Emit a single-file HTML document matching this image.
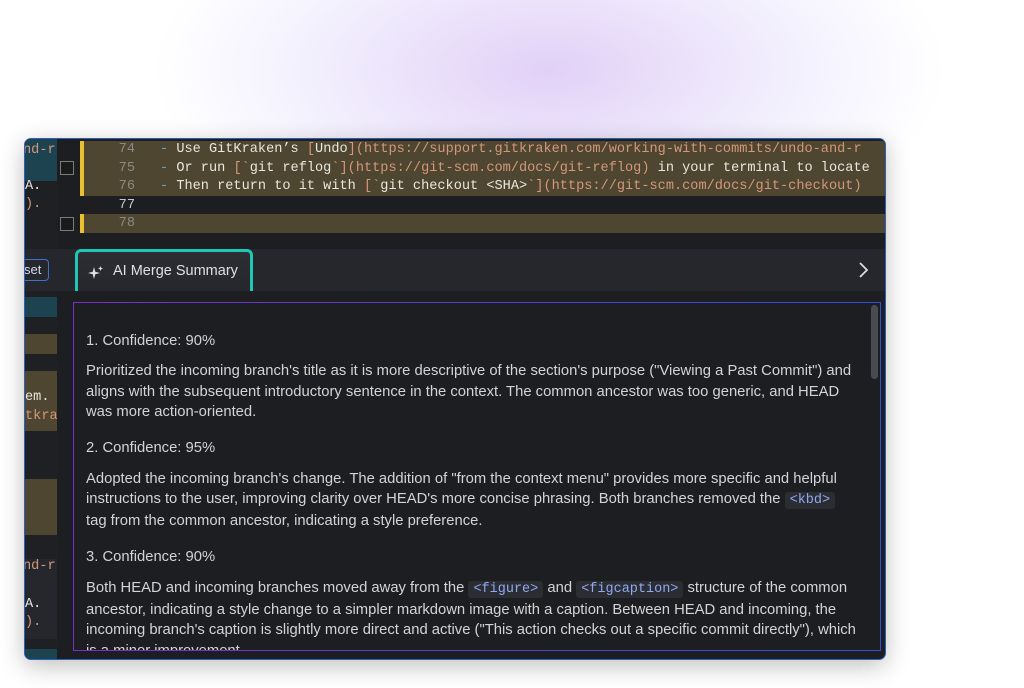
<!DOCTYPE html>
<html><head><meta charset="utf-8"><style>
*{margin:0;padding:0;box-sizing:border-box}
body{width:1024px;height:688px;background:#fff;position:relative;overflow:hidden;font-family:"Liberation Sans",sans-serif}
.glow{position:absolute;left:150px;top:-120px;width:800px;height:380px;border-radius:50%;background:radial-gradient(ellipse at center,rgba(200,170,240,.55),rgba(210,200,250,.25) 45%,rgba(255,255,255,0) 70%)}
.win{position:absolute;left:24px;top:138px;width:862px;height:522px;border-radius:7px;background:#1d1e22;overflow:hidden;border:1.5px solid #2d5fb5;box-shadow:0 6px 24px rgba(0,0,0,.25)}
.mono{font-family:"Liberation Mono",monospace;font-size:13.6px}
.code{position:absolute;left:0;top:0;width:862px;height:110px;background:#1d1e22}
.ln{position:absolute;left:80px;width:30px;text-align:right;color:#8a8a80;line-height:18.5px}
.tx{position:absolute;left:135px;color:#e8e6de;line-height:18.5px;white-space:nowrap}
.d{color:#5aa7d8}.o{color:#d4977a}
.cb{position:absolute;left:35px;width:14px;height:14px;border:1.5px solid #7a7a7a;background:#1a1a1a}
.yb{position:absolute;left:55px;width:4px;background:#e8c030}
.hl{position:absolute;left:59px;right:0;background:#4e4630}
.left{position:absolute;left:0;top:0;width:32px;height:522px;background:#1f2024;overflow:hidden;white-space:nowrap}
.hdr{position:absolute;left:0;top:110px;width:862px;height:42px;background:#25272d}
.tab{position:absolute;left:50px;top:0;width:178px;height:42px;border:3px solid #1fc7b5;border-bottom:none;border-radius:6px 6px 0 0;background:linear-gradient(#2c2e34,#25272d);color:#e0e0e0;font-size:14.5px;padding:11px 0 0 35px}
.box{position:absolute;left:48px;top:163px;width:808px;height:349px;border:1.5px solid;border-image:linear-gradient(90deg,#7a30c8,#3050d8) 1;background:#1d1e22;overflow:hidden}
.txt{position:absolute;left:12px;top:28px;color:#d4d4d4;font-size:14.8px;line-height:20.4px;white-space:nowrap}
.txt p{margin-bottom:15.5px}
.txt p.h{margin-bottom:10px}
code{font-family:"Liberation Mono",monospace;font-size:13.5px;background:#2b2d33;color:#8fa8f0;padding:1px 5px;border-radius:3px}
</style></head><body>
<div class="glow"></div>
<div class="win">
 <div class="code mono">
  <div class="hl" style="top:2px;height:55px"></div>
  <div class="hl" style="top:75px;height:18.5px"></div>
  <div class="yb" style="top:2px;height:55px"></div>
  <div class="yb" style="top:75px;height:18.5px"></div>
  <div class="cb" style="top:22px"></div>
  <div class="cb" style="top:78px"></div>
  <div class="ln" style="top:2px">74</div>
  <div class="ln" style="top:20.5px">75</div>
  <div class="ln" style="top:39px">76</div>
  <div class="ln" style="top:57.5px;color:#c8c8c8">77</div>
  <div class="ln" style="top:76px">78</div>
  <div class="tx" style="top:2px"><span class="d">-</span> Use GitKraken’s <span class="o">[</span>Undo<span class="o">](https://support.gitkraken.com/working-with-commits/undo-and-r</span></div>
  <div class="tx" style="top:20.5px"><span class="d">-</span> Or run <span class="o">[`</span>git reflog<span class="o">`](https://git-scm.com/docs/git-reflog)</span> in your terminal to locate</div>
  <div class="tx" style="top:39px"><span class="d">-</span> Then return to it with <span class="o">[`</span>git checkout &lt;SHA&gt;<span class="o">`](https://git-scm.com/docs/git-checkout)</span></div>
 </div>
 <div class="left mono">
  <div style="position:absolute;top:0;width:32px;height:42px;background:#1e4350"></div>
  <div style="position:absolute;top:4px;left:-2px;color:#d4977a">nd-r</div>
  <div style="position:absolute;top:40px;left:0;color:#e8e6de">A.</div>
  <div style="position:absolute;top:58px;left:0;color:#d4977a">).</div>
  <div style="position:absolute;top:158px;width:32px;height:20px;background:#1e4350"></div>
  <div style="position:absolute;top:195px;width:32px;height:20px;background:#4e4630"></div>
  <div style="position:absolute;top:232px;width:32px;height:60px;background:#4e4630"></div>
  <div style="position:absolute;top:251px;left:0;color:#e8e6de">em.</div>
  <div style="position:absolute;top:270px;left:0;color:#d4977a">tkra</div>
  <div style="position:absolute;top:340px;width:32px;height:56px;background:#4e4630"></div>
  <div style="position:absolute;top:420px;width:32px;height:80px;background:#25272c"></div>
  <div style="position:absolute;top:420px;left:-2px;color:#d4977a">nd-r</div>
  <div style="position:absolute;top:458px;left:0;color:#e8e6de">A.</div>
  <div style="position:absolute;top:476px;left:0;color:#d4977a">).</div>
  <div style="position:absolute;top:510px;width:32px;height:12px;background:#1e4350"></div>
 </div>
 <div class="hdr">
  <div style="position:absolute;left:-10px;top:10px;width:34px;height:22px;border:1.5px solid #3a72d0;border-radius:4px;color:#cfd8ea;font-size:13px;padding:2px 0 0 8px">set</div>
  <div class="tab"><svg style="position:absolute;left:10px;top:13px" width="16" height="16" viewBox="0 0 16 16" fill="#ddd"><path d="M6 2 L7.3 6.7 L12 8 L7.3 9.3 L6 14 L4.7 9.3 L0 8 L4.7 6.7Z"/><path d="M12.5 1 L13.2 2.8 L15 3.5 L13.2 4.2 L12.5 6 L11.8 4.2 L10 3.5 L11.8 2.8Z"/></svg>AI Merge Summary</div>
  <svg style="position:absolute;left:832px;top:12px" width="12" height="18" viewBox="0 0 12 18"><path d="M3 2 L10 9 L3 16" stroke="#ddd" stroke-width="1.8" fill="none"/></svg>
 </div>
 <div class="box">
  <div style="position:absolute;right:2px;top:2px;width:7px;height:74px;border-radius:4px;background:#4a4b50"></div>
  <div class="txt">
   <p class="h">1. Confidence: 90%</p>
   <p>Prioritized the incoming branch's title as it is more descriptive of the section's purpose ("Viewing a Past Commit") and<br>aligns with the subsequent introductory sentence in the context. The common ancestor was too generic, and HEAD<br>was more action-oriented.</p>
   <p class="h">2. Confidence: 95%</p>
   <p>Adopted the incoming branch's change. The addition of "from the context menu" provides more specific and helpful<br>instructions to the user, improving clarity over HEAD's more concise phrasing. Both branches removed the <code>&lt;kbd&gt;</code><br>tag from the common ancestor, indicating a style preference.</p>
   <p class="h">3. Confidence: 90%</p>
   <p>Both HEAD and incoming branches moved away from the <code>&lt;figure&gt;</code> and <code>&lt;figcaption&gt;</code> structure of the common<br>ancestor, indicating a style change to a simpler markdown image with a caption. Between HEAD and incoming, the<br>incoming branch's caption is slightly more direct and active ("This action checks out a specific commit directly"), which<br>is a minor improvement.</p>
  </div>
 </div>
</div>
</body></html>
